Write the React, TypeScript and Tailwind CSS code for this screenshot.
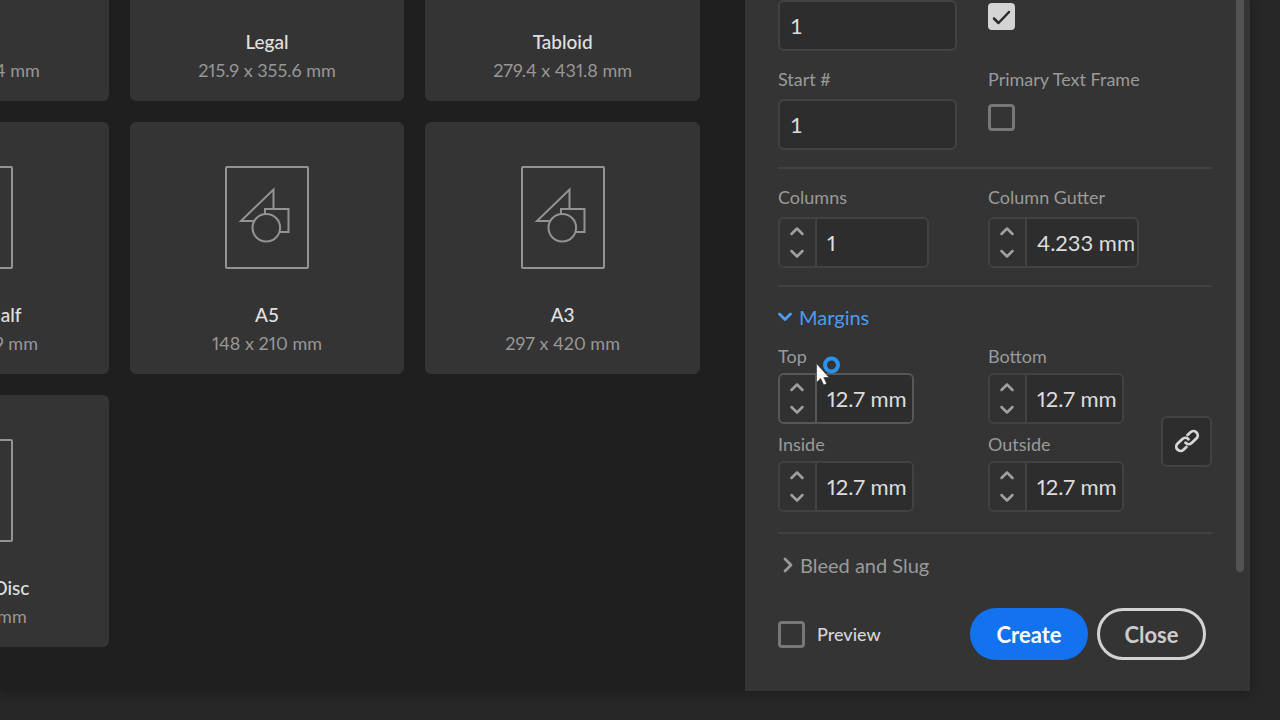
import { useId, useState } from "react";
import type { ReactNode } from "react";

type Preset = { name: string; size: string };

const presets: Preset[] = [
  { name: "Letter", size: "215.9 x 279.4 mm" },
  { name: "Legal", size: "215.9 x 355.6 mm" },
  { name: "Tabloid", size: "279.4 x 431.8 mm" },
  { name: "Letter - Half", size: "139.7 x 215.9 mm" },
  { name: "A5", size: "148 x 210 mm" },
  { name: "A3", size: "297 x 420 mm" },
  { name: "Compact Disc", size: "120 x 120 mm" },
];

function DocumentIcon() {
  return (
    <svg width="84" height="103" viewBox="0 0 84 103" fill="none" stroke="#939393" strokeWidth="2" aria-hidden="true">
      <rect x="1" y="1" width="82" height="101" rx="1" />
      <path d="M29 55H16L48.500 23.500V43" />
      <path d="M40 48V43H63.500V66H54" />
      <circle cx="41.300" cy="61.800" r="13.800" />
    </svg>
  );
}

function PresetCard({ name, size }: Preset) {
  return (
    <button type="button" className="flex h-[252px] flex-col items-center rounded-md bg-[#343434] pt-11">
      <DocumentIcon />
      <span className="mt-8 text-[19px] leading-7 font-medium text-[#e0e0e0]">{name}</span>
      <span className="text-[18px] leading-7 text-[#979797] proportional-nums">{size}</span>
    </button>
  );
}

function Chevron({ up = false }: { up?: boolean }) {
  return (
    <svg width="16" height="10" viewBox="0 0 16 10" fill="none" stroke="#a0a0a0" strokeWidth="2.500" strokeLinecap="round" strokeLinejoin="round" aria-hidden="true">
      <path d={up ? "M2.500 8L8 2.500L13.500 8" : "M2.500 2L8 7.500L13.500 2"} />
    </svg>
  );
}

function Label({ htmlFor, children }: { htmlFor: string; children: ReactNode }) {
  return (
    <label htmlFor={htmlFor} className="block text-[18px] leading-7 text-[#9a9a9a]">
      {children}
    </label>
  );
}

function TextField({ id, label }: { id?: string; label?: string }) {
  return (
    <input
      id={id}
      aria-label={label}
      defaultValue="1"
      className="block h-[51px] w-[179px] rounded-md border-2 border-[#424242] bg-[#2d2d2d] px-2.5 text-[22px] text-[#dcdcdc] outline-none"
    />
  );
}

function Stepper({ label, value, wide = false, active = false, tight = false }: { label: string; value: string; wide?: boolean; active?: boolean; tight?: boolean }) {
  const id = useId();
  return (
    <div className={`flex flex-col ${tight ? "gap-[3px]" : "gap-1.5"}`}>
      <Label htmlFor={id}>{label}</Label>
      <div
        className={`flex h-[51px] overflow-hidden rounded-md border-2 ${wide ? "w-[151px]" : "w-[136px]"} ${active ? "border-[#575757]" : "border-[#424242]"}`}
      >
        <div className={`flex w-[37px] shrink-0 flex-col border-r-2 bg-[#313131] ${active ? "border-[#575757]" : "border-[#424242]"}`}>
          <button type="button" aria-label={`Increase ${label}`} className="flex flex-1 items-center justify-center pr-0.5">
            <Chevron up />
          </button>
          <button type="button" aria-label={`Decrease ${label}`} className="flex flex-1 items-center justify-center pr-0.5">
            <Chevron />
          </button>
        </div>
        <input id={id} defaultValue={value} className="w-0 flex-1 bg-[#2d2d2d] pl-2.5 text-[22px] text-[#dcdcdc] proportional-nums outline-none" />
      </div>
    </div>
  );
}

function CheckBox({ id, label, initial = false }: { id?: string; label?: string; initial?: boolean }) {
  const [checked, setChecked] = useState(initial);
  return (
    <span className="relative block size-[27px]">
      <input
        id={id}
        type="checkbox"
        aria-label={label}
        checked={checked}
        onChange={(e) => setChecked(e.target.checked)}
        className="block size-[27px] appearance-none rounded-sm border-3 border-[#777777] checked:border-[#d4d4d4] checked:bg-[#d4d4d4]"
      />
      {checked && (
        <svg className="pointer-events-none absolute inset-0" width="27" height="27" viewBox="0 0 27 27" fill="none" stroke="#2b2b2b" strokeWidth="2.500" strokeLinecap="round" strokeLinejoin="round" aria-hidden="true">
          <path d="M6 15.500L10.500 20L21 9" />
        </svg>
      )}
    </span>
  );
}

function Divider() {
  return <hr className="h-0.5 border-0 bg-[#414141]" />;
}

function BusyCursor() {
  return (
    <svg className="pointer-events-none absolute top-[13px] left-[38px]" width="26" height="32" viewBox="0 0 26 32" aria-hidden="true">
      <circle cx="15.500" cy="10" r="6.500" fill="none" stroke="#2b93ee" strokeWidth="4" />
      <path d="M0.500 8.500V27.500L4.700 23.600L7.700 30L10.700 28.600L7.800 22.500H13Z" fill="#ffffff" stroke="#303030" strokeWidth="0.600" />
    </svg>
  );
}

function LinkIcon() {
  return (
    <svg width="30" height="30" viewBox="0 0 30 30" fill="none" stroke="#d6d6d6" strokeWidth="2.800" strokeLinecap="round" aria-hidden="true">
      <g transform="rotate(-43 15 15)">
        <path d="M10.500 19H6.500A4.300 4.300 0 0 1 6.500 10.400H13A4.300 4.300 0 0 1 17.300 14.700" />
        <path d="M19.500 11H23.500A4.300 4.300 0 0 1 23.500 19.600H17A4.300 4.300 0 0 1 12.700 15.300" />
      </g>
    </svg>
  );
}

export default function App() {
  return (
    <div className="flex h-screen flex-col overflow-hidden bg-[#272727] pr-[30px] pb-[29px] font-['Lato','Noto_Sans',sans-serif]">
      <div className="flex min-h-0 flex-1 bg-[#1f1f1f] shadow-[0_2px_12px_#00000055]">
        <main className="min-w-0 flex-1 overflow-hidden pr-[45px]">
          <div className="-mt-[151px] -ml-[166px] grid grid-cols-3 gap-x-[21px] gap-y-[21px]">
            {presets.map((p) => (
              <PresetCard key={p.name} {...p} />
            ))}
          </div>
        </main>

        <aside className="flex w-[505px] shrink-0 bg-[#343434]">
          <div className="flex flex-1 flex-col pl-[33px]">
            <div className="grid grid-cols-[210px_1fr]">
              <TextField label="Pages" />
              <div className="pt-[3px]">
                <CheckBox label="Facing Pages" initial />
              </div>
            </div>

            <div className="mt-3.5 mb-[17px] grid grid-cols-[210px_1fr]">
              <div className="flex flex-col gap-1.5">
                <Label htmlFor="start">Start #</Label>
                <TextField id="start" />
              </div>
              <div className="flex flex-col gap-[11px]">
                <Label htmlFor="frame">Primary Text Frame</Label>
                <CheckBox id="frame" />
              </div>
            </div>
            <Divider />

            <div className="mt-3.5 mb-[17px] grid grid-cols-[210px_1fr]">
              <Stepper label="Columns" value="1" wide />
              <Stepper label="Column Gutter" value="4.233 mm" wide />
            </div>
            <Divider />

            <button type="button" aria-expanded="true" className="mt-4 flex items-center gap-[7px] self-start text-[20px] leading-7 text-[#4b9cf5]">
              <svg width="14" height="10" viewBox="0 0 14 10" fill="none" stroke="currentColor" strokeWidth="2.800" strokeLinecap="round" strokeLinejoin="round" aria-hidden="true">
                <path d="M1.500 2L7 7.500L12.500 2" />
              </svg>
              Margins
            </button>

            <div className="mt-[11px] mb-5 flex items-center justify-between">
              <div className="grid grid-cols-[210px_136px] gap-y-1.5">
                <div className="relative">
                  <Stepper label="Top" value="12.7 mm" active tight />
                  <BusyCursor />
                </div>
                <Stepper label="Bottom" value="12.7 mm" tight />
                <Stepper label="Inside" value="12.7 mm" tight />
                <Stepper label="Outside" value="12.7 mm" tight />
              </div>
              <button type="button" aria-label="Make all settings the same" className="mt-7 flex size-[51px] items-center justify-center rounded-md border-2 border-[#424242] bg-[#2d2d2d]">
                <LinkIcon />
              </button>
            </div>
            <Divider />

            <button type="button" aria-expanded="false" className="mt-[17px] flex items-center gap-[7px] self-start pl-[5px] text-[20px] leading-7 text-[#9a9a9a]">
              <svg width="10" height="16" viewBox="0 0 10 16" fill="none" stroke="currentColor" strokeWidth="2.800" strokeLinecap="round" strokeLinejoin="round" aria-hidden="true">
                <path d="M2 2L8 8L2 14" />
              </svg>
              Bleed and Slug
            </button>

            <footer className="mt-[29px] flex items-center gap-[9px] pr-1.5">
              <div className="flex flex-1 items-center gap-3">
                <CheckBox id="preview" />
                <label htmlFor="preview" className="text-[18px] leading-7 font-medium text-[#d6d6d6]">
                  Preview
                </label>
              </div>
              <button type="button" className="h-[52px] w-[118px] rounded-full bg-[#1272ef] text-[22px] font-bold text-white">
                Create
              </button>
              <button type="button" className="h-[52px] w-[109px] rounded-full border-3 border-[#d2d2d2] text-[22px] font-bold text-[#cccccc]">
                Close
              </button>
            </footer>
          </div>
          <div className="w-[38px] shrink-0 pl-6">
            <div className="h-[572px] w-2 rounded-b-sm bg-[#525252]" />
          </div>
        </aside>
      </div>
    </div>
  );
}
